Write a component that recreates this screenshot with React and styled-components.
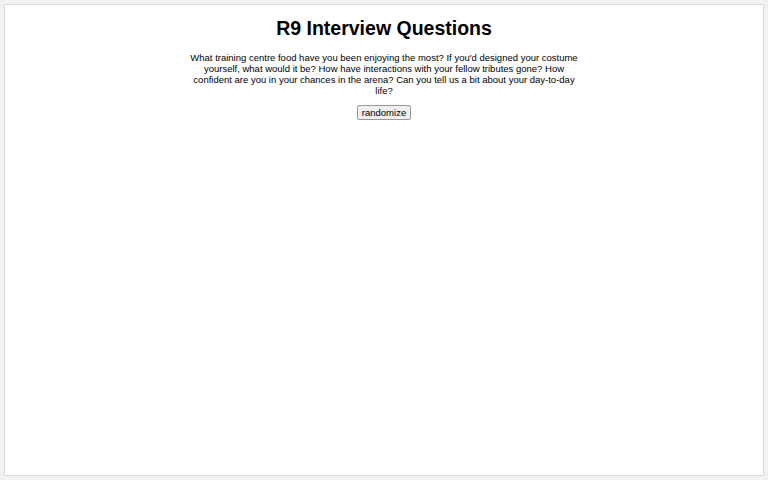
import styled, { createGlobalStyle } from "styled-components";

const GlobalStyle = createGlobalStyle`
  html, body {
    margin: 0;
    padding: 0;
    height: 100%;
    background: #f1f1f1;
    font-family: "Liberation Sans", Arial, sans-serif;
  }
  #root {
    height: 100%;
    padding: 4px;
    box-sizing: border-box;
  }
`;

const Panel = styled.main`
  height: 100%;
  box-sizing: border-box;
  background: #fff;
  border: 1px solid #dcdcdc;
  display: flex;
  flex-direction: column;
  align-items: center;
  padding-top: 12px;
`;

const Title = styled.h1`
  margin: 0 0 13px;
  font-size: 19.5px;
  line-height: 22px;
  font-weight: bold;
  color: #000;
`;

const Questions = styled.p`
  margin: 0 0 9px;
  max-width: 400px;
  text-align: center;
  font-size: 9.5px;
  line-height: 11px;
  color: #000;
`;

const RandomButton = styled.button`
  font-family: inherit;
  font-size: 9.5px;
  line-height: 11px;
  padding: 1px 4px;
  border: 1px solid #999;
  border-radius: 2px;
  background: #efefef;
  color: #000;
`;

const questions =
  "What training centre food have you been enjoying the most? If you'd designed your costume yourself, what would it be? How have interactions with your fellow tributes gone? How confident are you in your chances in the arena? Can you tell us a bit about your day-to-day life?";

export default function App() {
  return (
    <>
      <GlobalStyle />
      <Panel>
        <Title>R9 Interview Questions</Title>
        <Questions>{questions}</Questions>
        <RandomButton>randomize</RandomButton>
      </Panel>
    </>
  );
}
